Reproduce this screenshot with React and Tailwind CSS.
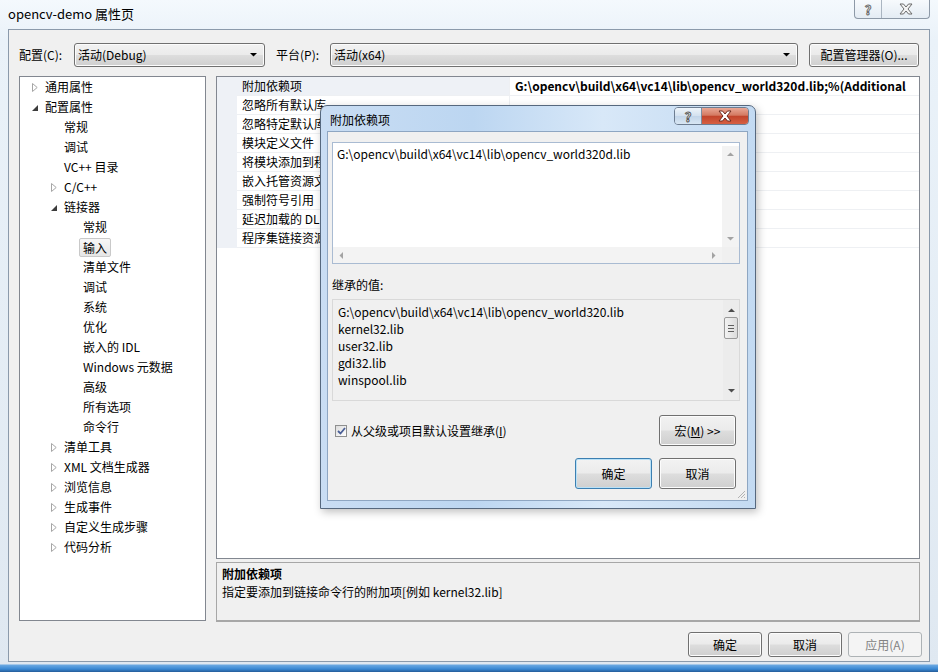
import React from "react";

const tree = [
  [0, "c", "通用属性"],
  [0, "e", "配置属性"],
  [1, "", "常规"],
  [1, "", "调试"],
  [1, "", "VC++ 目录"],
  [1, "c", "C/C++"],
  [1, "e", "链接器"],
  [2, "", "常规"],
  [2, "", "输入", true],
  [2, "", "清单文件"],
  [2, "", "调试"],
  [2, "", "系统"],
  [2, "", "优化"],
  [2, "", "嵌入的 IDL"],
  [2, "", "Windows 元数据"],
  [2, "", "高级"],
  [2, "", "所有选项"],
  [2, "", "命令行"],
  [1, "c", "清单工具"],
  [1, "c", "XML 文档生成器"],
  [1, "c", "浏览信息"],
  [1, "c", "生成事件"],
  [1, "c", "自定义生成步骤"],
  [1, "c", "代码分析"],
];

const indent = ["pl-[12px]", "pl-[31px]", "pl-[50px]"];

const props = [
  "附加依赖项",
  "忽略所有默认库",
  "忽略特定默认库",
  "模块定义文件",
  "将模块添加到程序集",
  "嵌入托管资源文件",
  "强制符号引用",
  "延迟加载的 DLL",
  "程序集链接资源",
];

const inherited = [
  "G:\\opencv\\build\\x64\\vc14\\lib\\opencv_world320.lib",
  "kernel32.lib",
  "user32.lib",
  "gdi32.lib",
  "winspool.lib",
];

const face =
  "flex items-center rounded-[3px] border border-[#707070] bg-[linear-gradient(to_bottom,#f2f2f2_0%,#ebebeb_48%,#dddddd_52%,#cfcfcf_100%)] shadow-[inset_0_0_0_1px_#fcfcfc]";
const btn = `${face} justify-center`;

function Collapsed() {
  return (
    <svg width="6" height="9" viewBox="0 0 6 9" className="block">
      <path d="M0.5 0.5 L5.2 4.5 L0.5 8.5 Z" fill="#fff" stroke="#a6a6a6" />
    </svg>
  );
}

function Expanded() {
  return (
    <svg width="6" height="6" viewBox="0 0 6 6" className="mt-[2px] block">
      <path d="M6 0 L6 6 L0 6 Z" fill="#3c3c3c" />
    </svg>
  );
}

function Arrow({ dir, color = "#a3a3a3" }) {
  const d = {
    up: "M0 4 L3.5 0.5 L7 4 Z",
    down: "M0 0 L7 0 L3.5 3.5 Z",
    left: "M4 0 L4 7 L0.5 3.5 Z",
    right: "M0 0 L3.5 3.5 L0 7 Z",
  }[dir];
  const vert = dir === "up" || dir === "down";
  return (
    <svg width={vert ? 7 : 4} height={vert ? 4 : 7} viewBox={vert ? "0 0 7 4" : "0 0 4 7"} className="block">
      <path d={d} fill={color} />
    </svg>
  );
}

function CaptionX({ fill = "#fff", stroke = "#555" }) {
  return (
    <svg width="14" height="12" viewBox="0 0 14 12" className="block">
      <path
        d="M1 1 L4.5 1 L7 4 L9.5 1 L13 1 L9 6 L13 11 L9.5 11 L7 8 L4.5 11 L1 11 L5 6 Z"
        fill={fill}
        stroke={stroke}
        strokeWidth="1"
        strokeLinejoin="round"
      />
    </svg>
  );
}

function Combo({ text, w }) {
  return (
    <div className={`${face} ${w} h-[24px] justify-between pl-[3px] pr-[7px]`}>
      <span className="leading-[16px]">{text}</span>
      <Arrow dir="down" color="#000" />
    </div>
  );
}

export default function App() {
  return (
    <div className="relative h-[672px] w-[938px] overflow-hidden bg-[linear-gradient(to_bottom,#f4f9fd_0px,#eaf2f9_40px,#dfe8f1_100%)] font-['Noto_Sans_CJK_SC',sans-serif] text-[12px] text-black">
      {/* title bar */}
      <div className="flex h-[29px] items-start justify-between">
        <div className="pl-[8px] pt-[6px] text-[13px] leading-[16px]">opencv-demo 属性页</div>
        <div className="mr-[8px] flex h-[19px] overflow-hidden rounded-b-[4px] border border-t-0 border-[#8d99a7] bg-[linear-gradient(to_bottom,#f7fafd,#e4ecf4)]">
          <div className="flex w-[27px] items-center justify-center border-r border-[#aab5c1] text-[13px] font-bold leading-none text-white [-webkit-text-stroke:1px_#6b6b6b]">
            ?
          </div>
          <div className="flex w-[47px] items-center justify-center">
            <CaptionX fill="#f4f4f4" stroke="#6b6b6b" />
          </div>
        </div>
      </div>

      {/* client */}
      <div className="ml-[8px] flex h-[633px] w-[922px] flex-col border border-[#8b9aab] bg-[#f0f0f0]">
        <div className="mt-[13px] flex h-[24px] items-center pl-[10px]">
          <span className="w-[55px] leading-[16px]">配置(C):</span>
          <Combo text="活动(Debug)" w="w-[191px]" />
          <span className="ml-[11px] w-[54px] leading-[16px]">平台(P):</span>
          <Combo text="活动(x64)" w="w-[468px]" />
          <div className={`${btn} ml-[11px] h-[24px] w-[110px]`}>配置管理器(O)...</div>
        </div>

        <div className="mt-[9px] flex pl-[10px]">
          {/* tree */}
          <div className="h-[545px] w-[187px] border border-[#828790] bg-white">
            {tree.map(([lvl, kind, label, sel], i) => (
              <div key={i} className={`flex h-[20px] items-center ${indent[lvl]}`}>
                <span className="flex w-[13px] items-center">
                  {kind === "c" && <Collapsed />}
                  {kind === "e" && <Expanded />}
                </span>
                {sel ? (
                  <span className="-ml-[4px] rounded-[2px] border border-[#c9c9c9] bg-[linear-gradient(to_bottom,#f7f7f7,#e6e6e6)] px-[3px] leading-[17px]">
                    {label}
                  </span>
                ) : (
                  <span className="whitespace-nowrap leading-[16px]">{label}</span>
                )}
              </div>
            ))}
          </div>

          {/* right side */}
          <div className="ml-[10px] flex w-[704px] flex-col">
            <div className="h-[483px] overflow-hidden border border-[#828790] bg-white">
              {props.map((n, i) => (
                <div key={i} className="flex h-[19px]">
                  <div className="w-[20px] bg-[#eef1f6]" />
                  <div
                    className={`w-[273px] whitespace-nowrap border-b border-r border-[#eef0f3] pl-[5px] leading-[18px] ${
                      i === 0 ? "bg-[#eef1f6]" : ""
                    }`}
                  >
                    {n}
                  </div>
                  <div className="min-w-0 flex-1 overflow-hidden whitespace-nowrap border-b border-[#eef0f3] pl-[5px] font-bold leading-[18px]">
                    {i === 0 ? "G:\\opencv\\build\\x64\\vc14\\lib\\opencv_world320d.lib;%(Additional" : ""}
                  </div>
                </div>
              ))}
            </div>
            <div className="mt-[3px] h-[60px] border border-b-2 border-[#a7a7a7] pl-[5px] pt-[2px]">
              <div className="font-bold leading-[18px]">附加依赖项</div>
              <div className="leading-[18px]">指定要添加到链接命令行的附加项[例如 kernel32.lib]</div>
            </div>
          </div>
        </div>

        <div className="mt-[10px] flex justify-end gap-[6px] pr-[7px]">
          <div className={`${btn} h-[25px] w-[74px]`}>确定</div>
          <div className={`${btn} h-[25px] w-[74px]`}>取消</div>
          <div className="flex h-[25px] w-[74px] items-center justify-center rounded-[3px] border border-[#adb2b5] bg-[#f4f4f4] text-[#838383]">
            应用(A)
          </div>
        </div>
      </div>

      {/* bottom frame */}
      <div className="h-[10px] bg-[linear-gradient(to_bottom,#dfe7f0_0px,#dfe7f0_2px,#6aa8e2_3px,#3a88d4_7px,#245c98_10px)]" />

      {/* modal dialog */}
      <div className="absolute left-[320px] top-[105px] flex h-[404px] w-[436px] flex-col rounded-t-[7px] border border-[#56687e] bg-[linear-gradient(to_right,#c9ddf3,#bcd6f1_35%,#d8e8f8_65%,#c3daf2)] shadow-[2px_3px_8px_rgba(0,0,0,0.25)]">
        <div className="flex h-[25px] items-start justify-between">
          <div className="pl-[9px] pt-[6px] leading-[16px]">附加依赖项</div>
          <div className="mr-[6px] mt-[1px] flex h-[18px] overflow-hidden rounded-[4px] border border-[#6d7d91]">
            <div className="flex w-[27px] items-center justify-center border-r border-[#7d8da0] bg-[linear-gradient(to_bottom,#eef4fa,#d3e1ef_50%,#c2d5e9_51%,#d8e6f3)] text-[13px] font-bold leading-none text-white [-webkit-text-stroke:1px_#5b5b5b]">
              ?
            </div>
            <div className="flex w-[46px] items-center justify-center bg-[linear-gradient(to_bottom,#e9a795,#d47a62_45%,#c2452c_52%,#d65f42)]">
              <CaptionX fill="#fff" stroke="#6b2b20" />
            </div>
          </div>
        </div>

        <div className="ml-[6px] flex h-[370px] w-[421px] flex-col border border-[#8ea6c2] bg-[#f0f0f0] pl-[4px]">
          {/* edit box */}
          <div className="mt-[10px] flex h-[123px] w-[408px] flex-col border border-[#a9bbd2] bg-white">
            <div className="flex min-h-0 flex-1">
              <div className="flex-1 pl-[4px] pt-[3px] leading-[16px]">
                G:\opencv\build\x64\vc14\lib\opencv_world320d.lib
              </div>
              <div className="mt-[3px] flex w-[17px] flex-col items-center justify-between bg-[#f3f3f3] py-[6px]">
                <Arrow dir="up" />
                <Arrow dir="down" />
              </div>
            </div>
            <div className="flex h-[16px]">
              <div className="flex flex-1 items-center justify-between bg-[#f3f3f3] px-[6px]">
                <Arrow dir="left" />
                <Arrow dir="right" />
              </div>
              <div className="w-[17px] bg-[#f0f0f0]" />
            </div>
          </div>

          <div className="mt-[13px] leading-[16px]">继承的值:</div>

          {/* inherited list */}
          <div className="mt-[6px] flex h-[102px] w-[408px] border border-[#d9d9d9] bg-[#f0f0f0]">
            <div className="flex-1 pl-[5px] pt-[3px]">
              {inherited.map((t) => (
                <div key={t} className="leading-[17px]">
                  {t}
                </div>
              ))}
            </div>
            <div className="flex w-[16px] flex-col items-center bg-[#ececec] pt-[8px]">
              <Arrow dir="up" color="#4d4d4d" />
              <div className="mt-[5px] flex h-[22px] w-[14px] flex-col items-center justify-center gap-[2px] rounded-[2px] border border-[#9a9a9a] bg-[linear-gradient(to_right,#f2f2f2,#dcdcdc)]">
                <div className="h-[1px] w-[6px] bg-[#5f5f5f]" />
                <div className="h-[1px] w-[6px] bg-[#5f5f5f]" />
                <div className="h-[1px] w-[6px] bg-[#5f5f5f]" />
              </div>
              <div className="flex-1" />
              <div className="mb-[7px]">
                <Arrow dir="down" color="#4d4d4d" />
              </div>
            </div>
          </div>

          {/* checkbox row */}
          <div className="mt-[14px] flex h-[31px] items-center justify-between pr-[11px]">
            <div className="flex items-center pl-[3px]">
              <div className="flex h-[12px] w-[12px] items-center justify-center border border-[#8e8f8f] bg-[linear-gradient(135deg,#dcdcdc,#fff)]">
                <svg width="9" height="8" viewBox="0 0 9 8" className="block">
                  <path d="M1 4 L3.5 6.5 L8 1" fill="none" stroke="#4a5f97" strokeWidth="1.8" />
                </svg>
              </div>
              <span className="ml-[4px] leading-[16px]">
                从父级或项目默认设置继承(<span className="underline">I</span>)
              </span>
            </div>
            <div className={`${btn} h-[31px] w-[77px]`}>
              宏(<span className="underline">M</span>)&nbsp;&gt;&gt;
            </div>
          </div>

          {/* ok / cancel */}
          <div className="mt-[12px] flex justify-end gap-[7px] pr-[11px]">
            <div className="flex h-[31px] w-[77px] items-center justify-center rounded-[3px] border border-[#3c7fb1] bg-[linear-gradient(to_bottom,#f2f2f2_0%,#ebebeb_48%,#dddddd_52%,#cfcfcf_100%)] shadow-[inset_0_0_0_1px_#b9e1f7]">
              确定
            </div>
            <div className={`${btn} h-[31px] w-[77px]`}>取消</div>
          </div>

          <div className="flex flex-1 items-end justify-end pb-[1px] pr-[1px]">
            <svg width="10" height="10" viewBox="0 0 10 10" className="block">
              <path d="M9 2 L2 9 M9 5 L5 9 M9 8 L8 9" stroke="#b3b3b3" strokeWidth="1" />
            </svg>
          </div>
        </div>
      </div>
    </div>
  );
}
